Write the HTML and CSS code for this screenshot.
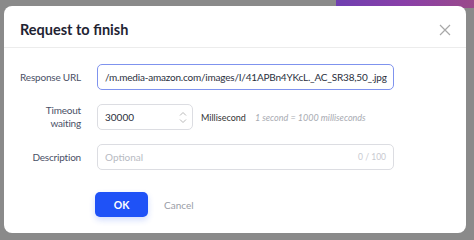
FILE: index.html
```html
<!DOCTYPE html>
<html>
<head>
<meta charset="utf-8">
<link rel="stylesheet" href="styles.css">
</head>
<body>
<div class="backdrop">
  <div class="strip"></div>
  <div class="modal">
    <div class="header">
      <div class="title">Request to finish</div>
      <svg class="close" width="12" height="12" viewBox="0 0 12 12"><path d="M1 1L11 11M11 1L1 11" stroke="#a8a8a8" stroke-width="1.2" fill="none"/></svg>
    </div>
    <div class="body">
      <div class="row">
        <div class="label">Response URL</div>
        <div class="input focused"><span class="val">/m.media-amazon.com/images/I/41APBn4YKcL._AC_SR38,50_.jpg</span></div>
      </div>
      <div class="row">
        <div class="label">Timeout<br>waiting</div>
        <div class="inline">
          <div class="input num"><span class="val">30000</span>
            <span class="spin">
              <svg width="8" height="5" viewBox="0 0 8 5"><path d="M1 4.5L4 1.5L7 4.5" stroke="#b8b8b8" stroke-width="1" fill="none"/></svg>
              <svg width="8" height="5" viewBox="0 0 8 5"><path d="M1 0.5L4 3.5L7 0.5" stroke="#b8b8b8" stroke-width="1" fill="none"/></svg>
            </span>
          </div>
          <span class="unit">Millisecond</span>
          <span class="hint">1 second = 1000 milliseconds</span>
        </div>
      </div>
      <div class="row">
        <div class="label">Description</div>
        <div class="input"><span class="ph">Optional</span><span class="count">0 / 100</span></div>
      </div>
      <div class="actions">
        <button class="ok">OK</button>
        <button class="cancel">Cancel</button>
      </div>
    </div>
  </div>
</div>
</body>
</html>
```
FILE: styles.css
```css
html, body { margin: 0; padding: 0; }
body {
  width: 474px; height: 240px; overflow: hidden;
  background: #8a8a8a;
  font-family: Lato, "Noto Sans", sans-serif;
}
.backdrop { position: relative; width: 474px; height: 240px; padding-top: 6px; box-sizing: border-box; }
.strip {
  position: absolute; left: 336px; top: 0; width: 138px; height: 8px;
  background: linear-gradient(90deg, #6f3fb0 0%, #8a3fa8 50%, #9a4a8a 100%);
}
.modal {
  position: relative;
  margin-left: 4px; width: 462px; height: 227px;
  background: #fff; border-radius: 8px;
  box-sizing: border-box;
}
.header {
  height: 42px; border-bottom: 1px solid #ececec;
  display: flex; align-items: center; justify-content: space-between;
  padding: 0 15px 0 16px; box-sizing: border-box;
}
.title { font-size: 14.5px; font-weight: 700; color: #1f2433; padding-top: 6px; }
.close { margin-top: 6px; }
.body { padding-top: 16px; }
.row {
  display: flex; align-items: center; margin-bottom: 14px;
}
.label {
  width: 77px; text-align: right; margin-right: 16px;
  font-size: 10px; letter-spacing: -0.2px; line-height: 13px; color: #4a5066;
}
.input {
  width: 297px; height: 26px; box-sizing: border-box;
  border: 1px solid #dcdde2; border-radius: 5px;
  display: flex; align-items: center; justify-content: space-between;
  padding: 0 7px; font-size: 10px; letter-spacing: -0.2px; color: #2a2f3d;
}
.input.focused { border-color: #7f93ee; }
.val { white-space: nowrap; }
.ph { color: #b7bac2; letter-spacing: 0; }
.count { color: #c8cad0; font-size: 8.5px; letter-spacing: 0; }
.inline { display: flex; align-items: center; }
.input.num { width: 96px; padding-right: 5px; letter-spacing: 0; }
.spin { display: flex; flex-direction: column; gap: 3px; }
.spin svg { display: block; }
.unit { font-size: 9px; color: #333; margin-left: 8px; }
.hint { font-size: 9px; font-style: italic; color: #a8abb2; margin-left: 9px; }
.actions { display: flex; align-items: center; padding-left: 91px; margin-top: 22px; }
button { font-family: inherit; border: 0; cursor: pointer; padding: 0; }
.ok {
  width: 53px; height: 25px; border-radius: 5px;
  background: #1f52f7; color: #fff; font-size: 10.5px; font-weight: 700;
  box-shadow: 0 3px 6px rgba(31, 82, 247, 0.2);
}
.cancel { background: none; color: #9a9da6; font-size: 10px; margin-left: 16px; }
```
